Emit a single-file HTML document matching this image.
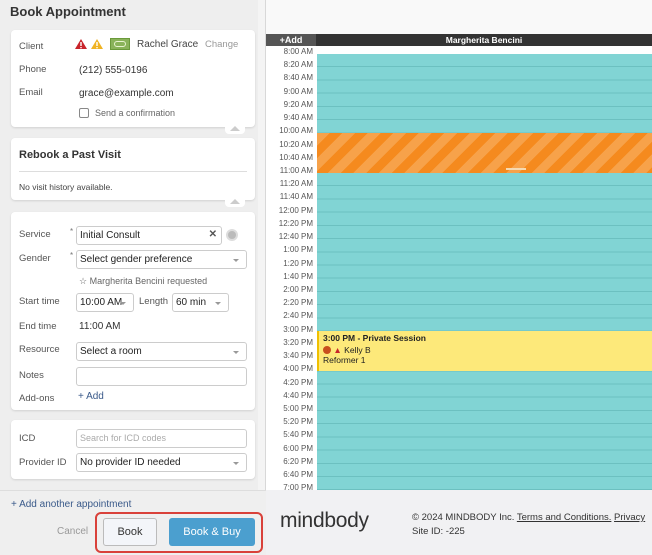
<!DOCTYPE html>
<html><head><style>
*{margin:0;padding:0;box-sizing:border-box}
body{width:652px;height:555px;overflow:hidden;position:relative;font-family:"Liberation Sans",sans-serif;background:#f9f9f9;color:#333}
.a{position:absolute}
#left{left:0;top:0;width:266px;height:555px;background:#eeeeee;border-right:1px solid #d8d8d8}
.card{position:absolute;left:11px;width:244px;background:#fff;border-radius:4px;box-shadow:0 1px 2px rgba(0,0,0,.12)}
.lbl{position:absolute;font-size:9.5px;color:#555}
.val{position:absolute;font-size:10px;color:#333}
.inp{position:absolute;height:19px;border:1px solid #ccc;border-radius:3px;background:#fff;font-size:10px;padding:3px 3px;color:#222}
.dd::after{content:"";position:absolute;right:7px;top:8px;border-left:3px solid transparent;border-right:3px solid transparent;border-top:3px solid #999}
.tab{position:absolute;width:20px;height:8px;background:#fff;border-radius:0 0 4px 4px}
.tab::after{content:"";position:absolute;left:5px;top:0;border-left:5px solid transparent;border-right:5px solid transparent;border-bottom:5px solid #ccc}
.t{position:absolute;left:265px;width:48px;text-align:right;font-size:8px;color:#555}
</style></head><body>
<div id="left" class="a"></div>
<div class="a" style="left:258px;top:0;width:7px;height:490px;background:#f4f4f4"></div>
<div class="a" style="left:10px;top:4px;font-size:13px;font-weight:bold;color:#333">Book Appointment</div>

<div class="card" style="top:30px;height:97px">
 <div class="lbl" style="left:8px;top:11px">Client</div>
 <svg class="a" style="left:64px;top:8px" width="30" height="12"><path d="M6 1L12 11H0Z" fill="#c8242b"/><rect x="5.3" y="4" width="1.4" height="4" fill="#fff"/><rect x="5.3" y="9" width="1.4" height="1.3" fill="#fff"/><path d="M22 1L28 11H16Z" fill="#f0b323"/><rect x="21.3" y="4" width="1.4" height="4" fill="#fff"/><rect x="21.3" y="9" width="1.4" height="1.3" fill="#fff"/></svg>
 <div class="a" style="left:99px;top:8px;width:20px;height:12px;background:#8ab35a;border:1px solid #6a9a3a"><div style="margin:2px 3px;height:6px;border:1px solid #e8f3d0;border-radius:3px"></div></div>
 <div class="val" style="left:126px;top:9px;font-size:10px;color:#444">Rachel Grace</div>
 <div class="val" style="left:194px;top:9px;font-size:9.5px;color:#999">Change</div>
 <div class="lbl" style="left:8px;top:34px">Phone</div>
 <div class="val" style="left:68px;top:35px">(212) 555-0196</div>
 <div class="lbl" style="left:8px;top:57px">Email</div>
 <div class="val" style="left:68px;top:58px">grace@example.com</div>
 <div class="a" style="left:68px;top:78px;width:10px;height:10px;border:1px solid #888;border-radius:2px"></div>
 <div class="a" style="left:84px;top:78px;font-size:9px;color:#666">Send a confirmation</div>
</div>
<div class="tab" style="left:225px;top:126px"></div>

<div class="card" style="top:138px;height:62px">
 <div class="a" style="left:8px;top:11px;font-size:11px;font-weight:bold;color:#333">Rebook a Past Visit</div>
 <div class="a" style="left:8px;top:33px;width:228px;height:1px;background:#ddd"></div>
 <div class="a" style="left:8px;top:44px;font-size:8.5px;color:#444">No visit history available.</div>
</div>
<div class="tab" style="left:225px;top:199px"></div>

<div class="card" style="top:212px;height:198px">
 <div class="lbl" style="left:8px;top:17px">Service</div><div class="a" style="left:59px;top:15px;font-size:8px;color:#777">*</div>
 <div class="inp" style="left:65px;top:14px;width:146px">Initial Consult<span style="position:absolute;right:4px;top:2px;font-weight:bold;color:#555">✕</span></div>
 <div class="a" style="left:215px;top:17px;width:12px;height:12px;border-radius:50%;background:#bbb;border:2px solid #ddd"></div>
 <div class="lbl" style="left:8px;top:41px">Gender</div><div class="a" style="left:59px;top:39px;font-size:8px;color:#777">*</div>
 <div class="inp dd" style="left:65px;top:38px;width:171px">Select gender preference</div>
 <div class="a" style="left:68px;top:64px;font-size:9px;color:#666">☆ Margherita Bencini requested</div>
 <div class="lbl" style="left:8px;top:84px">Start time</div>
 <div class="inp dd" style="left:65px;top:81px;width:58px;padding-right:10px">10:00 AM</div>
 <div class="lbl" style="left:128px;top:84px">Length</div>
 <div class="inp dd" style="left:161px;top:81px;width:57px">60 min</div>
 <div class="lbl" style="left:8px;top:109px">End time</div>
 <div class="val" style="left:68px;top:109px">11:00 AM</div>
 <div class="lbl" style="left:8px;top:132px">Resource</div>
 <div class="inp dd" style="left:65px;top:130px;width:171px">Select a room</div>
 <div class="lbl" style="left:8px;top:158px">Notes</div>
 <div class="inp" style="left:65px;top:155px;width:171px"></div>
 <div class="lbl" style="left:8px;top:181px">Add-ons</div>
 <div class="a" style="left:67px;top:179px;font-size:10px;color:#3a5a8a">+ Add</div>
</div>

<div class="card" style="top:420px;height:59px">
 <div class="lbl" style="left:8px;top:13px">ICD</div>
 <div class="inp" style="left:65px;top:9px;width:171px;color:#aaa;font-size:9px">Search for ICD codes</div>
 <div class="lbl" style="left:8px;top:37px">Provider ID</div>
 <div class="inp dd" style="left:65px;top:33px;width:171px">No provider ID needed</div>
</div>
<div class="a" style="left:0;top:490px;width:266px;height:65px;background:#efefef;border-top:1px solid #ddd"></div>
<div class="a" style="left:11px;top:499px;font-size:10px;color:#3a5a8a">+ Add another appointment</div>
<div class="a" style="left:57px;top:526px;font-size:10px;color:#999">Cancel</div>
<div class="a" style="left:95px;top:512px;width:168px;height:41px;border:2px solid #d9413a;border-radius:6px"></div>
<div class="a" style="left:103px;top:518px;width:54px;height:28px;background:#f3f5f9;border:1px solid #bbb;border-radius:3px;font-size:11px;text-align:center;line-height:26px;color:#333">Book</div>
<div class="a" style="left:169px;top:518px;width:86px;height:28px;background:#4b9fcf;border-radius:3px;font-size:11px;text-align:center;line-height:28px;color:#fff">Book &amp; Buy</div>

<div class="a" style="left:266px;top:34px;width:50px;height:12px;background:#555;color:#fff;font-size:9px;font-weight:bold;text-align:center;line-height:12px">+Add</div>
<div class="a" style="left:316px;top:34px;width:336px;height:12px;background:#333;color:#fff;font-size:8.5px;font-weight:bold;text-align:center;line-height:12px">Margherita Bencini</div>
<div class="a" style="left:266px;top:46px;width:51px;height:444px;background:#fff"></div>
<div class="a" style="left:317px;top:46px;width:335px;height:8px;background:#fff"></div>
<div class="a" style="left:317px;top:54px;width:335px;height:436px;background:repeating-linear-gradient(to bottom,#81d4d4 0,#81d4d4 12.2px,#6cc0c0 12.2px,#6cc0c0 13.22px)"></div>
<div class="a" style="left:317px;top:133px;width:335px;height:40px;background:repeating-linear-gradient(135deg,#f7a24a 0,#f7a24a 9px,#f58a1e 9px,#f58a1e 18px)"></div>
<div class="a" style="left:506px;top:168px;width:20px;height:2px;background:#f6d9b0"></div>
<div class="a" style="left:317px;top:331px;width:335px;height:40px;background:#fde97a;border-left:2px solid #f0c000"></div>
<div class="a" style="left:323px;top:333px;font-size:8.5px;font-weight:bold;color:#222">3:00 PM - Private Session</div>
<div class="a" style="left:323px;top:345px;font-size:8.5px;color:#222"><span style="display:inline-block;width:8px;height:8px;border-radius:50%;background:#c8501e;vertical-align:-1px"></span> <span style="color:#c8242b">▲</span> Kelly B</div>
<div class="a" style="left:323px;top:355px;font-size:8.5px;color:#222">Reformer 1</div>

<div class="t" style="top:47px">8:00 AM</div><div class="t" style="top:60.2px">8:20 AM</div><div class="t" style="top:73.4px">8:40 AM</div><div class="t" style="top:86.7px">9:00 AM</div><div class="t" style="top:99.9px">9:20 AM</div><div class="t" style="top:113.1px">9:40 AM</div><div class="t" style="top:126.3px">10:00 AM</div><div class="t" style="top:139.5px">10:20 AM</div><div class="t" style="top:152.8px">10:40 AM</div><div class="t" style="top:166px">11:00 AM</div><div class="t" style="top:179.2px">11:20 AM</div><div class="t" style="top:192.4px">11:40 AM</div><div class="t" style="top:205.6px">12:00 PM</div><div class="t" style="top:218.9px">12:20 PM</div><div class="t" style="top:232.1px">12:40 PM</div><div class="t" style="top:245.3px">1:00 PM</div><div class="t" style="top:258.5px">1:20 PM</div><div class="t" style="top:271.7px">1:40 PM</div><div class="t" style="top:285px">2:00 PM</div><div class="t" style="top:298.2px">2:20 PM</div><div class="t" style="top:311.4px">2:40 PM</div><div class="t" style="top:324.6px">3:00 PM</div><div class="t" style="top:337.8px">3:20 PM</div><div class="t" style="top:351.1px">3:40 PM</div><div class="t" style="top:364.3px">4:00 PM</div><div class="t" style="top:377.5px">4:20 PM</div><div class="t" style="top:390.7px">4:40 PM</div><div class="t" style="top:403.9px">5:00 PM</div><div class="t" style="top:417.2px">5:20 PM</div><div class="t" style="top:430.4px">5:40 PM</div><div class="t" style="top:443.6px">6:00 PM</div><div class="t" style="top:456.8px">6:20 PM</div><div class="t" style="top:470px">6:40 PM</div><div class="t" style="top:483.3px">7:00 PM</div>

<div class="a" style="left:266px;top:490px;width:386px;height:65px;background:#f1f1f3"></div>
<div class="a" style="left:280px;top:509px;font-size:21px;color:#333;letter-spacing:-0.3px">mindbody</div>
<div class="a" style="left:412px;top:512px;font-size:9.5px;color:#333;white-space:nowrap">© 2024 MINDBODY Inc. <u>Terms and Conditions.</u> <u>Privacy</u></div>
<div class="a" style="left:412px;top:526px;font-size:9.5px;color:#333">Site ID: -225</div>
</body></html>
